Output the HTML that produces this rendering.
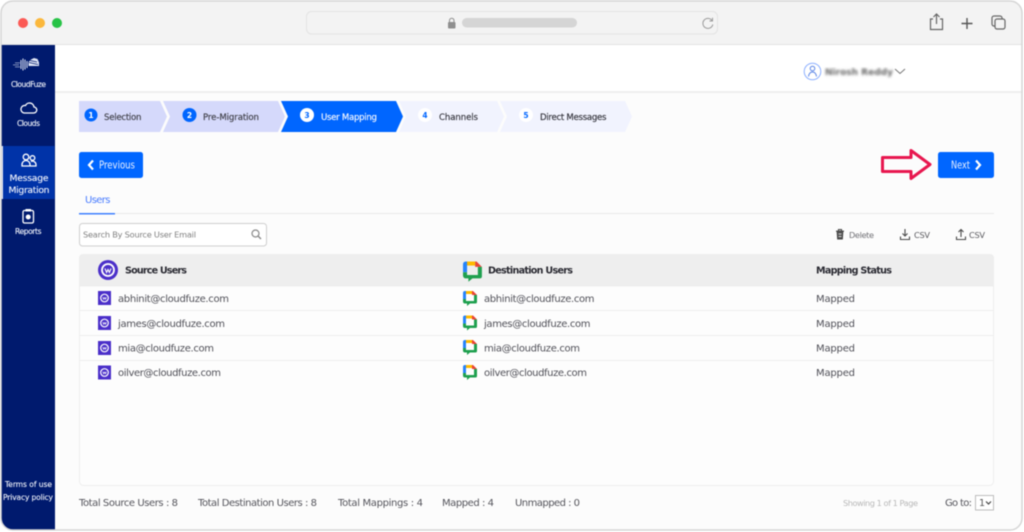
<!DOCTYPE html>
<html><head><meta charset="utf-8"><style>
html,body{margin:0;padding:0;background:#fff;width:1024px;height:532px;overflow:hidden}
svg{display:block;filter:blur(.5px)}
text{font-family:"DejaVu Sans","Liberation Sans",sans-serif}
.s{font-size:8.600px;fill:#3f3f48;stroke:#3f3f48;stroke-width:.15px}
.r{font-size:10px;fill:#505058}
.h{font-size:9.600px;fill:#2a2a32;font-weight:700}
.f{font-size:10px;fill:#55555c}
.w{fill:#f2f5fc;font-size:7.500px;stroke:#f2f5fc;stroke-width:.1px}
.ic{fill:none;stroke:#fff;stroke-width:1.300}
.g{fill:none;stroke:#4a4a4a;stroke-width:1.100}
</style></head><body>
<svg width="1024" height="532" viewBox="0 0 1024 532" xmlns="http://www.w3.org/2000/svg">
<defs>
<clipPath id="win"><rect x="1" y="1" width="1021" height="529" rx="12"/></clipPath>
<filter id="bl"><feGaussianBlur stdDeviation="1.400"/></filter>
<g id="wp"><rect x="0" y="0" width="13" height="14" fill="#4b2fc9"/><circle cx="6.500" cy="7" r="3.800" fill="none" stroke="#fff" stroke-width="1.200"/><path d="M4.800 6.200l.9 2 .9-1.600.9 1.600.9-2" fill="none" stroke="#fff" stroke-width=".7"/></g>
<g id="gc"><path d="M0 2a2 2 0 0 1 2-2h7v3H3v5H0z" fill="#2684fc"/><path d="M9 0h1l4 4h-5z" fill="#ea4335"/><path d="M3 0h6v3H3z" fill="#ffba00"/><path d="M0 8h3v2h8V4h3v7a1.500 1.500 0 0 1-1.500 1.500H7L4 15v-2.500H2a2 2 0 0 1-2-2z" fill="#1fa04f"/></g>
</defs>
<rect width="1024" height="532" fill="#fff"/>
<g clip-path="url(#win)">
<rect x="0" y="0" width="1024" height="532" fill="#fcfcfc"/>
<rect x="0" y="0" width="1024" height="44" fill="#f3f3f3"/>
<rect x="0" y="44" width="1024" height="1" fill="#e2e2e2"/>
<rect x="55" y="45" width="969" height="46" fill="#fff"/>
<rect x="55" y="91" width="969" height="2" fill="#eeeeee"/>
<rect x="1" y="45" width="54" height="486" fill="#001a6e"/>
<rect x="3" y="146" width="51.500" height="53" fill="#0033a8"/>
<rect x="1" y="146" width="2" height="53" fill="#dfe3ee"/>
</g>
<rect x="1" y="1" width="1021" height="529" rx="12" fill="none" stroke="#d6d6d6" stroke-width="1.500"/>

<!-- traffic lights -->
<circle cx="23" cy="23" r="5" fill="#fb5a55"/><circle cx="40" cy="23" r="5" fill="#fbb83c"/><circle cx="57" cy="23" r="5" fill="#27c346"/>
<!-- url bar -->
<rect x="306.500" y="11.500" width="411" height="22.500" rx="5" fill="#f3f3f3" stroke="#e3e3e3"/>
<rect x="448" y="22" width="7.500" height="6.500" rx="1" fill="#8f8f8f"/><path d="M449.500 22v-1.500a2.200 2.200 0 0 1 4.500 0V22" fill="none" stroke="#8f8f8f" stroke-width="1"/>
<rect x="462" y="18" width="115" height="9.500" rx="4.700" fill="#d5d5d5"/>
<path d="M712 20.500a5 5 0 1 0 .8 4" fill="none" stroke="#9a9a9a" stroke-width="1"/><path d="M712.500 17.800v3.200h-3" fill="none" stroke="#9a9a9a" stroke-width="1"/>
<!-- toolbar right -->
<path d="M933 19h-2.500v10.500h12V19H940M936.500 24V14.500M933.500 17l3-3 3 3" fill="none" stroke="#666" stroke-width="1.200"/>
<path d="M967 18v11M961.500 23.500h11" fill="none" stroke="#555" stroke-width="1.400"/>
<rect x="995" y="19" width="10" height="10" rx="2" fill="none" stroke="#666" stroke-width="1.200"/><path d="M995 26h-1a2 2 0 0 1-2-2v-6a2 2 0 0 1 2-2h6a2 2 0 0 1 2 2v1" fill="none" stroke="#666" stroke-width="1.200"/>

<!-- profile -->
<circle cx="812.500" cy="71.500" r="8.300" fill="none" stroke="#8db0ff" stroke-width="1"/>
<circle cx="812.500" cy="68.500" r="2.300" fill="none" stroke="#5c86e6" stroke-width="1"/><path d="M808.500 76.500c.5-3 1.800-4.500 4-4.500s3.500 1.500 4 4.500" fill="none" stroke="#5c86e6" stroke-width="1"/>
<text x="825" y="75" font-size="9" font-weight="700" fill="#666" textLength="68" lengthAdjust="spacingAndGlyphs" filter="url(#bl)">Nirosh Reddy</text>
<path d="M895 69l5 4.500 5-4.500" fill="none" stroke="#777" stroke-width="1"/>

<!-- sidebar -->
<g fill="#dfe5f5">
<path d="M13 64.500h6v.8h-6zM15 62.500h5v.7h-5zM15 66.500h5v.7h-5z" opacity=".75"/>
<path d="M20.500 60h1v9h-1zM22.500 58.500h1v12h-1zM24.500 59.500h1v10h-1zM26.500 61h1v7h-1z"/>
<path d="M28.500 62l2.500-2.500 3-1.500 3.500 1 1.500 3.500v3.500h-10.500z"/><path d="M29 62.500l9 2M30 60.500l7 1.500" stroke="#001a6e" stroke-width=".7"/>
</g>
<text x="11" y="87" class="w" textLength="35">CloudFuze</text>
<path d="M24 113h9.500a3 3 0 0 0 .5-6 4.500 4.500 0 0 0-8.500-1.500A3.800 3.800 0 0 0 24 113z" class="ic"/>
<text x="17" y="126" class="w" textLength="23">Clouds</text>
<circle cx="26" cy="157" r="2.800" class="ic"/><circle cx="32.500" cy="158" r="2.300" class="ic"/><path d="M22 166v-1.500a4 4 0 0 1 8 0V166zM31 161.500a3.500 3.500 0 0 1 5 3V166h-6" class="ic"/>
<text x="9.500" y="181" class="w" style="font-size:9.200px" textLength="39">Message</text>
<text x="8.500" y="193" class="w" style="font-size:9.200px" textLength="41">Migration</text>
<rect x="23" y="210.500" width="10.500" height="12.500" rx="1.500" class="ic"/><rect x="25.500" y="209" width="5.500" height="2.500" fill="#fff"/><circle cx="28.200" cy="217" r="2.500" fill="#fff"/>
<text x="15" y="234" class="w" textLength="26.500">Reports</text>
<text x="5" y="487" class="w" textLength="47">Terms of use</text>
<text x="3" y="500" class="w" textLength="50">Privacy policy</text>

<!-- steps -->
<path d="M79 101h81l7 15.500-7 15.500H79z" fill="#d5d9fb"/>
<path d="M163 101h115l7 15.500-7 15.500H163l7-15.500z" fill="#d5d9fb"/>
<path d="M281 101h115l7 15.500-7 15.500H281l7-15.500z" fill="#0066ff"/>
<path d="M399 101h98l7 15.500-7 15.500H399l7-15.500z" fill="#f1f3fe"/>
<path d="M500 101h125l7 15.500-7 15.500H500l7-15.500z" fill="#f1f3fe"/>
<circle cx="91" cy="115" r="6.500" fill="#0066ff"/><circle cx="189.500" cy="115" r="7" fill="#0066ff"/>
<circle cx="307" cy="115" r="7" fill="#fff"/><circle cx="425" cy="115" r="7" fill="#fff"/><circle cx="526" cy="115" r="7" fill="#fff"/>
<g font-size="7.500" font-weight="700" text-anchor="middle">
<text x="91" y="118" fill="#fff">1</text><text x="189.500" y="118" fill="#fff">2</text>
<text x="307" y="118" fill="#0066ff">3</text><text x="425" y="118" fill="#0066ff">4</text><text x="526" y="118" fill="#0066ff">5</text>
</g>
<text x="104" y="120" class="s" textLength="37.500">Selection</text>
<text x="203" y="120" class="s" textLength="56">Pre-Migration</text>
<text x="321" y="120" class="s" style="fill:#f4f7ff;stroke:#f4f7ff" textLength="56">User Mapping</text>
<text x="439" y="120" class="s" style="fill:#33333b;stroke:#33333b" textLength="39">Channels</text>
<text x="540" y="120" class="s" style="fill:#33333b;stroke:#33333b" textLength="66.500">Direct Messages</text>

<!-- buttons -->
<rect x="79" y="152" width="64" height="26" rx="2.500" fill="#0066ff"/>
<path d="M93 160.500l-4 4.500 4 4.500" fill="none" stroke="#fff" stroke-width="2.200"/>
<text x="99" y="168.500" font-size="10.200" fill="#e8efff" textLength="36" lengthAdjust="spacingAndGlyphs">Previous</text>
<rect x="938" y="152" width="56" height="26" rx="2.500" fill="#0066ff"/>
<text x="951" y="168.500" font-size="10.200" fill="#e8efff" textLength="19" lengthAdjust="spacingAndGlyphs">Next</text>
<path d="M976 160.500l4 4.500-4 4.500" fill="none" stroke="#fff" stroke-width="2.200"/>
<path d="M882.500 157.500h28.500v-7l19 14-19 14v-7h-28.500z" fill="none" stroke="#e8174f" stroke-width="3" stroke-linejoin="round"/>

<!-- tab -->
<text x="85" y="203" font-size="10" fill="#4a7dff" textLength="25.500">Users</text>
<rect x="79" y="213" width="915" height="1" fill="#e9e9e9"/>
<rect x="79" y="213" width="36" height="1.500" fill="#3f80ff"/>

<!-- search -->
<rect x="79.500" y="223.500" width="187" height="22.500" rx="3" fill="#fff" stroke="#cfcfcf"/>
<text x="83" y="237.500" font-size="8.200" fill="#808080" textLength="113">Search By Source User Email</text>
<circle cx="255.500" cy="233.500" r="3.500" fill="none" stroke="#8a8a8a" stroke-width="1.200"/><path d="M258 236l3 3" stroke="#8a8a8a" stroke-width="1.400"/>

<!-- actions -->
<path d="M836 231.200h8M837.200 231.500l.5 7.500h4.600l.5-7.500" fill="#555" stroke="#444" stroke-width="1.100"/><path d="M838.500 231v-1.500h3v1.500" class="g"/><path d="M838.500 234h3M838.500 236.500h3" stroke="#fff" stroke-width=".7"/>
<text x="849" y="238" font-size="8.200" fill="#707075" textLength="25">Delete</text>
<path d="M905 229v7M902.500 233.500l2.500 2.500 2.500-2.500M900.500 236.500v3h9v-3" class="g"/>
<text x="914" y="238" font-size="8.200" fill="#58585d" textLength="16">CSV</text>
<path d="M961 237v-7.500M958.500 232l2.500-2.500 2.500 2.500M956.500 236.500v3h9v-3" class="g"/>
<text x="969" y="238" font-size="8.200" fill="#58585d" textLength="16">CSV</text>

<!-- table -->
<rect x="79.500" y="254.500" width="914" height="231" rx="4" fill="#fdfdfd" stroke="#eeeeee"/>
<path d="M79 258a4 4 0 0 1 4-4h907a4 4 0 0 1 4 4v28.500H79z" fill="#eeeeee"/>
<rect x="80" y="310" width="913" height="1" fill="#eeeeee"/>
<rect x="80" y="335" width="913" height="1" fill="#eeeeee"/>
<rect x="80" y="360" width="913" height="1" fill="#eeeeee"/>
<circle cx="108" cy="270" r="10" fill="#4b2fc9"/><circle cx="108" cy="270" r="6" fill="none" stroke="#fff" stroke-width="1.800"/><path d="M105 268.500l1.600 4 1.400-3 1.400 3 1.600-4" fill="none" stroke="#fff" stroke-width="1.100"/>
<text x="125" y="273.500" class="h" textLength="62">Source Users</text>
<use href="#gc" transform="translate(463 261.500) scale(1.350)"/>
<text x="488" y="273.500" class="h" textLength="85">Destination Users</text>
<text x="816" y="273.500" class="h" textLength="76">Mapping Status</text>

<use href="#wp" x="98" y="291"/><use href="#gc" x="463" y="291"/>
<text x="118" y="302" class="r" textLength="111">abhinit@cloudfuze.com</text>
<text x="484" y="302" class="r" textLength="110.500">abhinit@cloudfuze.com</text>
<text x="816" y="302" class="r" textLength="39">Mapped</text>
<use href="#wp" x="98" y="316"/><use href="#gc" x="463" y="315.500"/>
<text x="118" y="327" class="r" textLength="107">james@cloudfuze.com</text>
<text x="484" y="327" class="r" textLength="106.500">james@cloudfuze.com</text>
<text x="816" y="327" class="r" textLength="39">Mapped</text>
<use href="#wp" x="98" y="341"/><use href="#gc" x="463" y="340"/>
<text x="118" y="351.500" class="r" textLength="96">mia@cloudfuze.com</text>
<text x="484" y="351.500" class="r" textLength="96">mia@cloudfuze.com</text>
<text x="816" y="351.500" class="r" textLength="39">Mapped</text>
<use href="#wp" x="98" y="365.500"/><use href="#gc" x="463" y="365"/>
<text x="118" y="376" class="r" textLength="103">oilver@cloudfuze.com</text>
<text x="484" y="376" class="r" textLength="103">oilver@cloudfuze.com</text>
<text x="816" y="376" class="r" textLength="39">Mapped</text>

<!-- footer -->
<text x="79" y="506" class="f" textLength="99">Total Source Users : 8</text>
<text x="198" y="506" class="f" textLength="119">Total Destination Users : 8</text>
<text x="338" y="506" class="f" textLength="85">Total Mappings : 4</text>
<text x="442" y="506" class="f" textLength="52">Mapped : 4</text>
<text x="515" y="506" class="f" textLength="65">Unmapped : 0</text>
<text x="843" y="506" font-size="8.200" fill="#b8b8b8" textLength="75">Showing 1 of 1 Page</text>
<text x="945" y="506" font-size="10" fill="#55555c" textLength="27">Go to:</text>
<rect x="975.500" y="495.500" width="18" height="14.500" fill="#fff" stroke="#bdbdbd"/>
<text x="979" y="506" font-size="9.500" fill="#555">1</text>
<path d="M986 501.500l2.500 2.500 2.500-2.500" fill="none" stroke="#444" stroke-width="1.200"/>
</svg>
</body></html>
